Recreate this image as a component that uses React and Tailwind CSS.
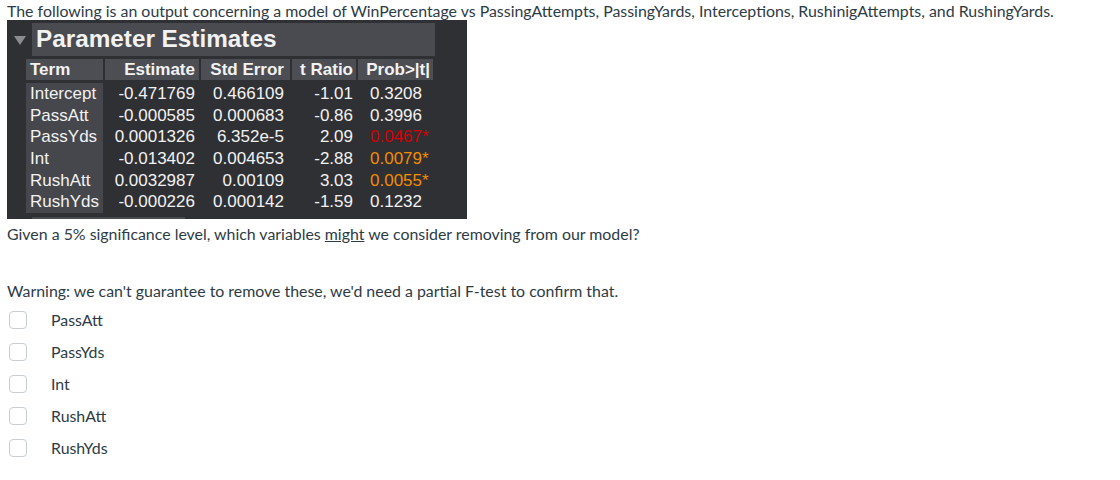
import React from 'react';

const rows = [
  { term: 'Intercept', est: '-0.471769', se: '0.466109', t: '-1.01', p: '0.3208', color: 'text-[#f2f2f2]' },
  { term: 'PassAtt', est: '-0.000585', se: '0.000683', t: '-0.86', p: '0.3996', color: 'text-[#f2f2f2]' },
  { term: 'PassYds', est: '0.0001326', se: '6.352e-5', t: '2.09', p: '0.0467*', color: 'text-[#d40000]' },
  { term: 'Int', est: '-0.013402', se: '0.004653', t: '-2.88', p: '0.0079*', color: 'text-[#f28c00]' },
  { term: 'RushAtt', est: '0.0032987', se: '0.00109', t: '3.03', p: '0.0055*', color: 'text-[#f28c00]' },
  { term: 'RushYds', est: '-0.000226', se: '0.000142', t: '-1.59', p: '0.1232', color: 'text-[#f2f2f2]' },
];

const options = ['PassAtt', 'PassYds', 'Int', 'RushAtt', 'RushYds'];

const ParamTable = () => (
  <div className="w-[460px] h-[199px] bg-[#2f3034] flex flex-col font-['Liberation_Sans',Arial,sans-serif] text-[#f2f2f2]">
    {/* title bar */}
    <div className="flex items-center mt-[3px] h-[33px]">
      <div className="w-[25px] flex justify-center">
        <svg width="12" height="9" viewBox="0 0 12 9" className="ml-[1px] mt-[2px]">
          <path d="M0 0 L12 0 L6 9 Z" fill="#8b8c90" />
        </svg>
      </div>
      <div className="w-[403px] h-[33px] bg-[#4a4b50] flex items-center pl-[4px] text-[24.3px] font-bold leading-none">
        Parameter Estimates
      </div>
    </div>

    {/* table */}
    <div className="ml-[19px] mt-[3px] text-[17px] leading-none">
      <div className="grid grid-cols-[77px_94px_89px_64px_75px] gap-x-[2px] h-[21px] font-bold">
        <div className="bg-[#4c4e53] flex items-center pl-[4px]">Term</div>
        <div className="bg-[#4c4e53] flex items-center justify-end pr-[4px]">Estimate</div>
        <div className="bg-[#4c4e53] flex items-center justify-end pr-[6px]">Std Error</div>
        <div className="bg-[#4c4e53] flex items-center justify-end pr-[3px]">t Ratio</div>
        <div className="bg-[#4c4e53] flex items-center justify-end pr-[3px]">Prob&gt;|t|</div>
      </div>
      <div className="mt-[3px]">
        {rows.map((r) => (
          <div key={r.term} className="grid grid-cols-[77px_94px_89px_64px_75px] gap-x-[2px] h-[21.6px]">
            <div className="bg-[#45474c] flex items-center pl-[4px]">{r.term}</div>
            <div className="flex items-center justify-end pr-[4px]">{r.est}</div>
            <div className="flex items-center justify-end pr-[6px]">{r.se}</div>
            <div className="flex items-center justify-end pr-[3px]">{r.t}</div>
            <div className={`flex items-center pl-[12px] ${r.color}`}>{r.p}</div>
          </div>
        ))}
      </div>
    </div>

    <div className="mt-auto ml-[25px] w-[153px] h-[2px] bg-[#4a4b50]" />
  </div>
);

export default function App() {
  return (
    <div className="pl-[7px] pt-[2px] bg-white min-h-[480px] font-['Lato','Noto_Sans',sans-serif] text-[15.9px] text-[#2d3b45]">
      <p className="leading-[18px]">
        The following is an output concerning a model of WinPercentage vs PassingAttempts, PassingYards, Interceptions, RushinigAttempts, and RushingYards.
      </p>
      <ParamTable />
      <p className="leading-[18px] mt-[6px]">
        Given a 5% significance level, which variables <span className="underline">might</span> we consider removing from our model?
      </p>
      <p className="leading-[18px] mt-[39px]">
        Warning: we can't guarantee to remove these, we'd need a partial F-test to confirm that.
      </p>
      <div className="mt-[4px] flex flex-col">
        {options.map((o) => (
          <label key={o} className="flex items-center h-[32px]">
            <span className="ml-[2px] w-[18px] h-[18px] rounded-[4px] border border-[#c7cdd1] bg-white" />
            <span className="ml-[24px]">{o}</span>
          </label>
        ))}
      </div>
    </div>
  );
}
